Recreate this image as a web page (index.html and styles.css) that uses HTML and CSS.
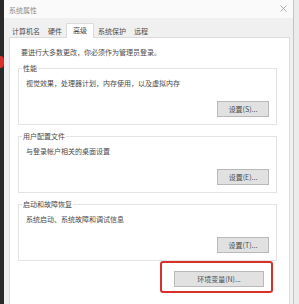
FILE: index.html
```html
<!DOCTYPE html>
<html lang="zh-CN">
<head>
  <meta charset="UTF-8">
  <title>系统属性</title>
  <link rel="stylesheet" href="styles.css">
</head>
<body>
  <div class="screen">
    <div class="taskbar"><span class="badge"></span></div>

    <div class="dialog">
      <div class="titlebar">
        <span class="title">系统属性</span>
        <svg class="close" width="7" height="7" viewBox="0 0 7 7">
          <path d="M0.5 0.5 L6.5 6.5 M6.5 0.5 L0.5 6.5" stroke="#9a9a9a" stroke-width="0.8" fill="none"/>
        </svg>
      </div>

      <div class="tabs">
        <span class="tab">计算机名</span>
        <span class="tab">硬件</span>
        <span class="tab active">高级</span>
        <span class="tab">系统保护</span>
        <span class="tab">远程</span>
      </div>

      <div class="panel">
        <p class="note">要进行大多数更改，你必须作为管理员登录。</p>

        <div class="group">
          <span class="legend">性能</span>
          <p class="desc">视觉效果，处理器计划，内存使用，以及虚拟内存</p>
          <div class="actions"><button class="btn">设置(S)...</button></div>
        </div>

        <div class="group">
          <span class="legend">用户配置文件</span>
          <p class="desc">与登录帐户相关的桌面设置</p>
          <div class="actions"><button class="btn">设置(E)...</button></div>
        </div>

        <div class="group">
          <span class="legend">启动和故障恢复</span>
          <p class="desc">系统启动、系统故障和调试信息</p>
          <div class="actions"><button class="btn">设置(T)...</button></div>
        </div>

        <div class="env-row">
          <div class="highlight">
            <button class="btn env">环境变量(N)...</button>
          </div>
        </div>
      </div>
    </div>

    <div class="edge"></div>
  </div>
</body>
</html>
```

FILE: styles.css
```css
:root {
  --text: #4a4a4a;
  --muted: #8c8c8c;
  --line: #dcdcdc;
  --face: #f0f0f0;
  --btn: #e1e1e1;
  --btn-border: #b9b9b9;
  --mark: #d9302c;
}

* {
  margin: 0;
  padding: 0;
  box-sizing: border-box;
}

body {
  font-family: "Noto Sans CJK SC", "Noto Sans", sans-serif;
  font-size: 7px;
  line-height: 10px;
  color: var(--text);
  background: #ebebeb;
  overflow: hidden;
}

.screen {
  display: flex;
  height: 304px;
}

.taskbar {
  width: 4px;
  background: #2a2a2a;
  overflow: hidden;
}

.badge {
  display: block;
  width: 8px;
  height: 12px;
  margin: 56px 0 0 -4px;
  border-radius: 4px;
  background: var(--mark);
}

.dialog {
  width: 290px;
  display: flex;
  flex-direction: column;
  background: var(--face);
  border-right: 1px solid #c4c4c4;
}

.edge {
  flex: 1;
  background: #ebebeb;
}

/* title bar */
.titlebar {
  height: 18px;
  display: flex;
  align-items: center;
  justify-content: space-between;
  padding: 1px 6px 0 5px;
  background: #fafafa;
}

.title {
  color: var(--muted);
}

.close {
  margin-top: -2px;
}

/* tabs */
.tabs {
  height: 19px;
  display: flex;
  align-items: flex-end;
  padding-left: 4px;
}

.tab {
  height: 12px;
  line-height: 12px;
  padding: 0 4px;
  white-space: nowrap;
}

.tab.active {
  position: relative;
  z-index: 1;
  height: 15px;
  padding: 0 6px 3px;
  margin-bottom: -1px;
  background: #fff;
  border: 1px solid var(--line);
  border-bottom: none;
}

/* panel */
.panel {
  flex: 1;
  margin: 0 3px 0 5px;
  padding: 9px 12px 0 8px;
  background: #fff;
  border: 1px solid var(--line);
  border-bottom: none;
}

.note {
  margin-left: 3px;
  white-space: nowrap;
}

.group {
  position: relative;
  height: 57px;
  margin-top: 11px;
  padding: 9px 7px 7px;
  border: 1px solid #e3e3e3;
}

.legend {
  position: absolute;
  top: -6px;
  left: 3px;
  padding: 0 1px;
  background: #fff;
}

.desc {
  white-space: nowrap;
}

.actions {
  display: flex;
  justify-content: flex-end;
  margin-top: 13px;
}

.btn {
  width: 52px;
  height: 16px;
  font-family: inherit;
  font-size: 7px;
  line-height: 14px;
  color: var(--text);
  background: var(--btn);
  border: 1px solid var(--btn-border);
  border-radius: 0;
}

.btn.env {
  width: 90px;
}

.env-row {
  display: flex;
  justify-content: flex-end;
  padding-right: 4px;
}

.highlight {
  padding: 8px 7px 4px 12px;
  border: 2px solid var(--mark);
  border-radius: 3px;
}
```
